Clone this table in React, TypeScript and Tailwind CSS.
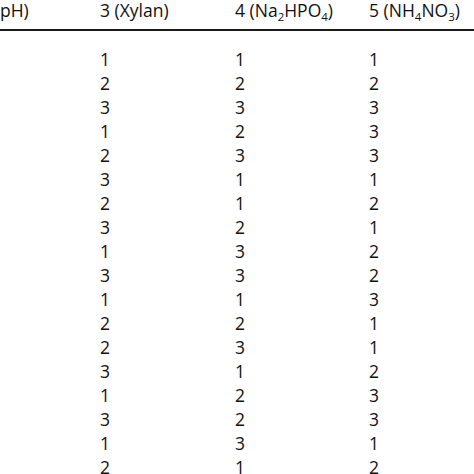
const rows: [number, number, number][] = [
  [1, 1, 1],
  [2, 2, 2],
  [3, 3, 3],
  [1, 2, 3],
  [2, 3, 3],
  [3, 1, 1],
  [2, 1, 2],
  [3, 2, 1],
  [1, 3, 2],
  [3, 3, 2],
  [1, 1, 3],
  [2, 2, 1],
  [2, 3, 1],
  [3, 1, 2],
  [1, 2, 3],
  [3, 2, 3],
  [1, 3, 1],
  [2, 1, 2],
];

function Sub({ children }: { children: React.ReactNode }) {
  return <sub className="text-[11.5px] bottom-[-4px]">{children}</sub>;
}

export default function App() {
  return (
    <div className="w-[474px] h-[474px] overflow-hidden bg-white text-[#111] font-['Open_Sans',sans-serif] text-[17.5px]">
      <div className="grid grid-cols-[100px_135px_134px_1fr] pb-[8px] leading-[21px] whitespace-nowrap">
        <div>pH)</div>
        <div>3 (Xylan)</div>
        <div>
          4 (Na<Sub>2</Sub>HPO<Sub>4</Sub>)
        </div>
        <div>
          5 (NH<Sub>4</Sub>NO<Sub>3</Sub>)
        </div>
      </div>
      <div className="h-[2px] bg-[#1a1a1a]" />
      <div className="pt-[16px]">
        {rows.map((r, i) => (
          <div key={i} className="grid grid-cols-[100px_135px_134px_1fr] leading-[24px]">
            <div />
            <div>{r[0]}</div>
            <div>{r[1]}</div>
            <div>{r[2]}</div>
          </div>
        ))}
      </div>
    </div>
  );
}
